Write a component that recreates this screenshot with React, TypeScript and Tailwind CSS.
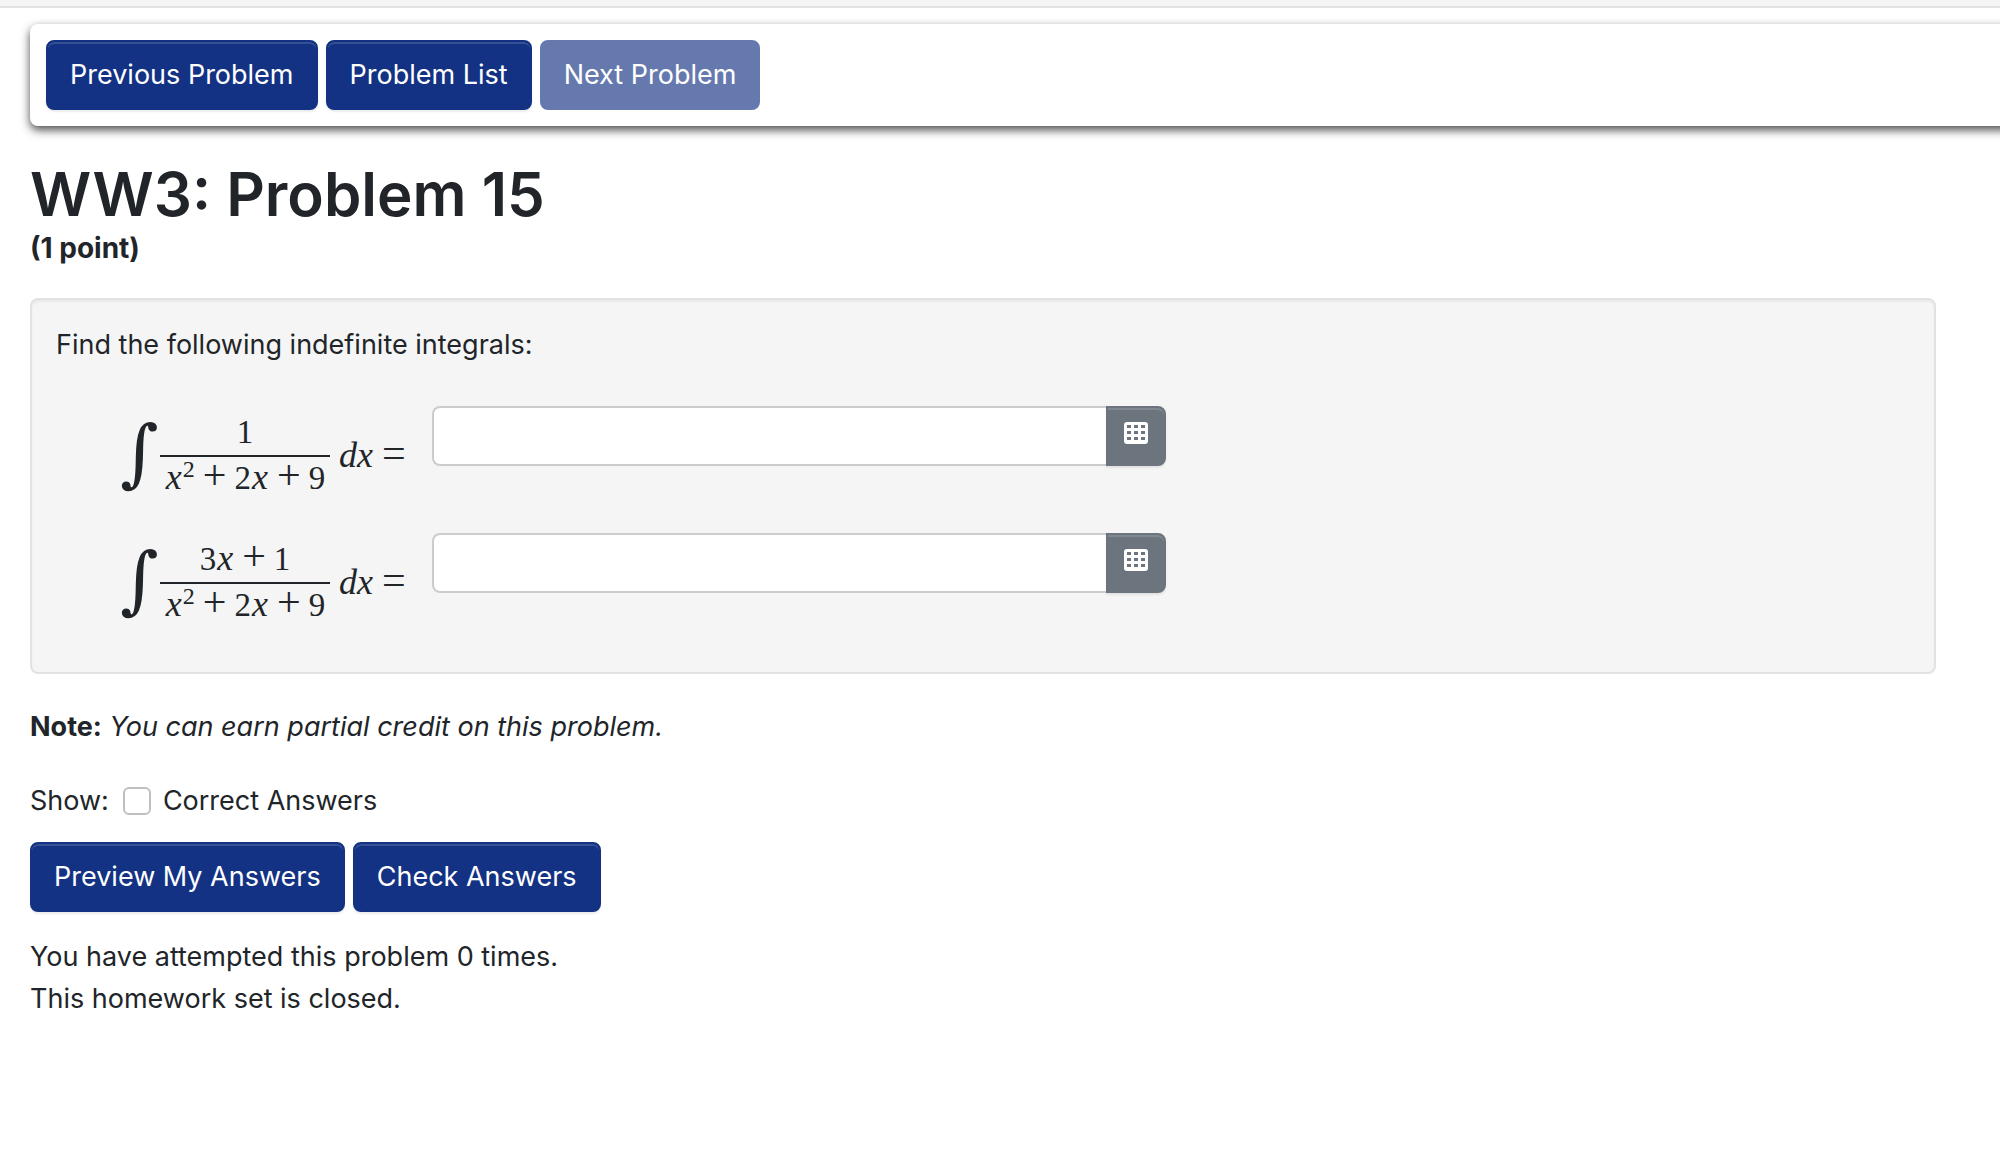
import { useState } from "react";
import type { ReactNode } from "react";

interface Problem {
  id: string;
  label: string;
  numerator: ReactNode;
}

const V = ({ children }: { children: ReactNode }) => (
  <i className="px-px text-[36px] leading-8">{children}</i>
);

const Op = ({ children }: { children: ReactNode }) => (
  <span className="px-2 text-[42px] leading-8">{children}</span>
);

const problems: Problem[] = [
  {
    id: "AnSwEr0001",
    label: "answer 1",
    numerator: <span>1</span>,
  },
  {
    id: "AnSwEr0002",
    label: "answer 2",
    numerator: (
      <>
        <span>3</span>
        <V>x</V>
        <Op>+</Op>
        <span>1</span>
      </>
    ),
  },
];

const primary =
  "h-[70px] rounded-lg bg-[#133283] px-[22px] text-white shadow-[inset_0_2px_0_rgba(255,255,255,0.15),0_2px_2px_rgba(0,0,0,0.075)] border-2 border-[#133283] disabled:opacity-65 disabled:shadow-none";

function TableIcon() {
  return (
    <svg width="24" height="22" viewBox="0 0 24 22" fill="none" aria-hidden="true">
      <rect width="24" height="22" rx="3" fill="white" />
      {[3, 9, 15].map((y) =>
        [3, 10, 17].map((x) => (
          <rect key={`${x}-${y}`} x={x} y={y} width="4" height="3" fill="#6c757d" />
        ))
      )}
    </svg>
  );
}

function Integral({ numerator }: { numerator: ReactNode }) {
  return (
    <div className="flex items-center pt-[5px] font-['Liberation_Serif','Times_New_Roman',serif] text-[33px] leading-[42px]">
      <i className="w-10 pb-2 font-['DejaVu_Serif',serif] text-[74px] leading-[76px]">∫</i>
      <div className="flex w-[170px] flex-col items-center">
        <div className="flex h-[46px] w-full items-baseline justify-center border-b-2 border-[#212529]">
          {numerator}
        </div>
        <div className="flex h-[44px] items-baseline">
          <V>x</V>
          <sup className="text-[24px] leading-8">2</sup>
          <Op>+</Op>
          <span>2</span>
          <V>x</V>
          <Op>+</Op>
          <span>9</span>
        </div>
      </div>
      <div className="flex items-baseline pb-1 pl-2">
        <V>dx</V>
        <Op>=</Op>
      </div>
    </div>
  );
}

export default function App() {
  const [answers, setAnswers] = useState<Record<string, string>>({});
  const [showCorrect, setShowCorrect] = useState(false);

  return (
    <div className="min-h-screen overflow-x-hidden bg-white font-[Inter,sans-serif] text-[27px] leading-[42px] text-[#212529]">
      <div className="h-2 border-b-2 border-[#e2e2e2] bg-[#f5f5f5]" />

      <main className="pl-[30px] pr-16 pt-4">
        {/* Problem navigation */}
        <nav className="-mr-20 flex gap-2 rounded-lg bg-white p-4 shadow-[0_4px_10px_rgba(0,0,0,0.7)]">
          <button className={primary}>Previous Problem</button>
          <button className={primary}>Problem List</button>
          <button className={primary} disabled>
            Next Problem
          </button>
        </nav>

        <h1 className="mt-8 text-[60px] font-semibold leading-[72px]">WW3: Problem 15</h1>
        <h2 className="text-[28px] font-bold leading-9">(1 point)</h2>

        {/* Problem body */}
        <section className="mt-8 rounded-lg border-2 border-[#e2e2e2] bg-[#f5f5f5] px-6 pb-11 pt-6 shadow-[inset_0_2px_2px_rgba(0,0,0,0.05)]">
          <p>Find the following indefinite integrals:</p>
          <div className="mt-10 flex flex-col gap-8 pl-16">
            {problems.map((p) => (
              <div key={p.id} className="flex items-start">
                <div className="w-[312px]">
                  <Integral numerator={p.numerator} />
                </div>
                <div className="flex h-[60px] w-full max-w-[734px]">
                  <input
                    id={p.id}
                    type="text"
                    aria-label={p.label}
                    value={answers[p.id] ?? ""}
                    onChange={(e) => setAnswers({ ...answers, [p.id]: e.target.value })}
                    className="min-w-0 flex-1 rounded-l-lg border-2 border-r-0 border-[#cccccc] bg-white px-3 outline-none"
                  />
                  <button
                    aria-label={`Equation editor for ${p.label}`}
                    className="flex w-[60px] justify-center rounded-r-lg border-2 border-[#6c757d] bg-[#6c757d] pt-[14px] shadow-[inset_0_2px_0_rgba(255,255,255,0.15),0_2px_2px_rgba(0,0,0,0.075)]"
                  >
                    <TableIcon />
                  </button>
                </div>
              </div>
            ))}
          </div>
        </section>

        <p className="mt-8">
          <b>Note:</b> <i>You can earn partial credit on this problem.</i>
        </p>

        <div className="mt-8 flex items-center">
          <span>Show:</span>
          <input
            id="showCorrect"
            type="checkbox"
            checked={showCorrect}
            onChange={(e) => setShowCorrect(e.target.checked)}
            className="ml-[14px] size-7 appearance-none rounded-md border-2 border-[#bfbfbf] bg-white checked:bg-[#133283]"
          />
          <label htmlFor="showCorrect" className="pl-3">
            Correct Answers
          </label>
        </div>

        <div className="mt-5 flex gap-2">
          <button className={primary}>Preview My Answers</button>
          <button className={primary}>Check Answers</button>
        </div>

        <div className="mt-6">
          <p>You have attempted this problem 0 times.</p>
          <p>This homework set is closed.</p>
        </div>
      </main>
    </div>
  );
}
